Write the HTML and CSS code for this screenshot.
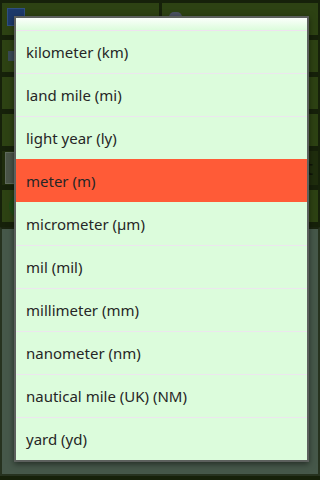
FILE: index.html
```html
<!DOCTYPE html>
<html>
<head>
<meta charset="utf-8">
<link rel="stylesheet" href="styles.css">
</head>
<body>
<div class="app">
  <div class="row">
    <div class="btn half"><span class="ico ico-blue"></span></div>
    <div class="btn half"><span class="ico ico-gear"></span></div>
  </div>
  <div class="row"><div class="btn"><span class="ico ico-small"></span></div></div>
  <div class="row"><div class="btn"></div></div>
  <div class="row"><div class="btn"></div></div>
  <div class="row row-input">
    <div class="field"></div>
    <div class="field-label">t</div>
  </div>
  <div class="row"><div class="btn"><span class="ico ico-circle"></span></div></div>
  <div class="panel"></div>
</div>

<div class="dialog">
  <ul class="list">
    <li class="item partial"></li>
    <li class="item">kilometer (km)</li>
    <li class="item">land mile (mi)</li>
    <li class="item">light year (ly)</li>
    <li class="item selected">meter (m)</li>
    <li class="item">micrometer (µm)</li>
    <li class="item">mil (mil)</li>
    <li class="item">millimeter (mm)</li>
    <li class="item">nanometer (nm)</li>
    <li class="item">nautical mile (UK) (NM)</li>
    <li class="item">yard (yd)</li>
  </ul>
</div>
</body>
</html>
```

FILE: styles.css
```css
html, body {
  margin: 0;
  padding: 0;
  width: 320px;
  height: 480px;
  overflow: hidden;
  background: #16210a;
  font-family: "Noto Sans", "Open Sans", sans-serif;
}

.app {
  display: flex;
  flex-direction: column;
  gap: 5px;
  padding: 3px 2px 0 2px;
  height: 480px;
  box-sizing: border-box;
}

.row {
  display: flex;
  gap: 3px;
  height: 32px;
  flex: none;
}

.btn {
  flex: 1;
  background: #2d4213;
  display: flex;
  align-items: center;
  padding-left: 5px;
}

.ico { display: block; }
.ico-blue { width: 16px; height: 16px; background: #1d3a6a; border: 1px solid #2f4f80; margin-top: -4px; }
.ico-gear { width: 13px; height: 10px; background: #4a5060; border-radius: 5px 5px 0 0; margin-top: -4px; margin-left: 2px; }
.ico-small { width: 8px; height: 10px; background: #3a4a55; margin-left: 1px; }
.ico-circle { width: 18px; height: 22px; border-radius: 50%; background: #1e4a14; margin-left: 2px; }

.row-input {
  align-items: stretch;
  background: #1f2d0d;
  padding: 1px 3px;
  justify-content: space-between;
}
.field {
  width: 60px;
  background: #4a5448;
  border: 1px solid #5f6a5c;
}
.field-label {
  color: #101408;
  font-size: 20px;
  line-height: 32px;
  padding-right: 2px;
}

.panel {
  flex: 1;
  margin: 0 -2px 4px -2px;
  background: #46584a;
  border: 2px solid #26321f;
  border-top-color: #1a2410;
}

.dialog {
  position: absolute;
  left: 14px;
  top: 16px;
  width: 291px;
  height: 442px;
  border: 2px solid #5c605d;
  background: #dcfcdc;
  box-shadow: 0 2px 6px rgba(0,0,0,0.5);
  overflow: hidden;
}

.list {
  list-style: none;
  margin: 0;
  padding: 0;
}

.item {
  height: 42px;
  border-top: 1px solid #ece6ee;
  padding-left: 10px;
  font-size: 15px;
  line-height: 42px;
  color: #262626;
  white-space: nowrap;
}

.item.partial {
  height: 12px;
  border-top: none;
  background: linear-gradient(#fbfffb, #dcfcdc);
}

.item.partial + .item { border-top-color: #efe2f0; }

.item.selected {
  background: #ff5b37;
  border-top-color: #ff5b37;
}
.item.selected + .item { border-top-color: #dcfcdc; }
```
